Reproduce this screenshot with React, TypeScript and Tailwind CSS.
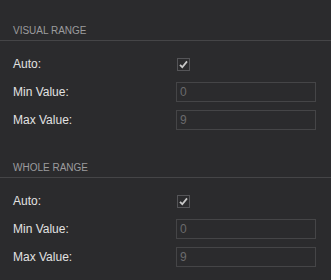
import React from "react"

function Check() {
  return (
    <div className="ml-px flex h-[13px] w-[13px] items-center justify-center border border-[#555558] bg-[#2b2b2d]">
      <svg width="11" height="11" viewBox="0 0 11 11">
        <path d="M2 5.8 L4.3 8.2 L9 2.4" fill="none" stroke="#c9c9c9" strokeWidth="1.8" />
      </svg>
    </div>
  )
}

function Field({ value }: { value: string }) {
  return (
    <div className="flex h-[20px] w-[140px] items-center border border-[#454547] pl-[3px] text-[12px] text-[#6a6a6c]">
      {value}
    </div>
  )
}

function Row({ label, children }: { label: string; children: React.ReactNode }) {
  return (
    <div className="flex h-[20px] items-center">
      <div className="w-[176px] shrink-0 pl-[13px] text-[12px] text-[#e2e2e2]">{label}</div>
      {children}
    </div>
  )
}

function Section({ title }: { title: string }) {
  return (
    <div className="pt-[24px] pb-[7px]">
      <div className="h-[17px] border-b border-[#454547] pl-[13px] text-[10px] leading-[14px] text-[#9c9c9e]">
        {title}
      </div>
      <div className="mt-[13px] flex flex-col gap-[8px]">
        <Row label="Auto:">
          <Check />
        </Row>
        <Row label="Min Value:">
          <Field value="0" />
        </Row>
        <Row label="Max Value:">
          <Field value="9" />
        </Row>
      </div>
    </div>
  )
}

export default function App() {
  return (
    <div className="h-[280px] w-full overflow-hidden bg-[#2b2b2d]" style={{ fontFamily: '"Liberation Sans", Arial, sans-serif' }}>
      <Section title="VISUAL RANGE" />
      <Section title="WHOLE RANGE" />
    </div>
  )
}
